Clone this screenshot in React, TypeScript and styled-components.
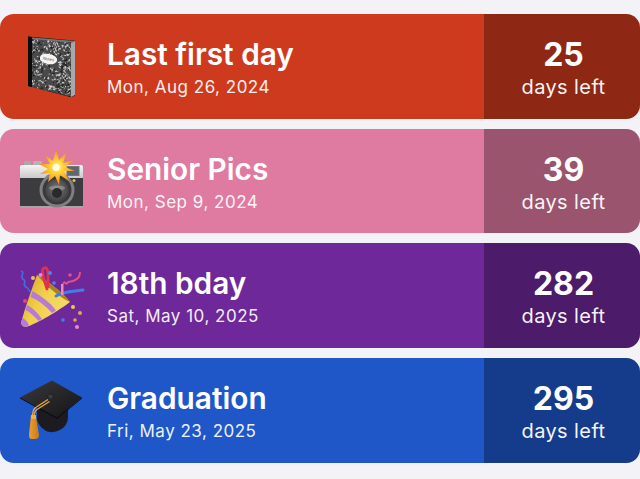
import React from "react";
import styled, { createGlobalStyle } from "styled-components";

const GlobalStyle = createGlobalStyle`
  html, body {
    margin: 0;
    padding: 0;
    background: #f2f2f7;
    font-family: "Inter", "Liberation Sans", sans-serif;
  }
`;

const Page = styled.div`
  width: 640px;
  height: 479px;
  box-sizing: border-box;
  padding-top: 14px;
  display: flex;
  flex-direction: column;
  gap: 10px;
  overflow: hidden;
`;

const Card = styled.div<{ $bg: string }>`
  height: 104.7px;
  flex: none;
  display: flex;
  align-items: stretch;
  border-radius: 14px;
  overflow: hidden;
  background: ${(p) => p.$bg};
  color: #fff;
`;

const IconSlot = styled.div`
  width: 70px;
  margin-left: 18px;
  flex: none;
  display: flex;
  align-items: center;
`;

const Info = styled.div`
  flex: 1;
  margin-left: 20px;
  padding-top: 2px;
  display: flex;
  flex-direction: column;
  justify-content: center;
  gap: 6px;
`;

const Title = styled.div`
  font-size: 29.8px;
  line-height: 34px;
  font-weight: 600;
  margin-left: -1px;
`;

const DateText = styled.div`
  font-size: 17px;
  line-height: 21px;
  letter-spacing: 0.5px;
  opacity: 0.92;
  margin-left: -1px;
`;

const Countdown = styled.div`
  width: 156px;
  flex: none;
  box-sizing: border-box;
  padding: 2px 0 0 3px;
  background: rgba(0, 0, 0, 0.31);
  display: flex;
  flex-direction: column;
  align-items: center;
  justify-content: center;
  gap: 1px;
`;

const Count = styled.div`
  font-size: 32px;
  line-height: 39px;
  font-weight: 700;
`;

const Unit = styled.div`
  font-size: 20px;
  line-height: 25px;
  letter-spacing: 0.4px;
  opacity: 0.95;
`;

// small seeded random so the marble cover looks the same on every run
let seed = 7;
const rnd = () => {
  seed = (seed * 16807) % 2147483647;
  return seed / 2147483647;
};

const speckles = Array.from({ length: 520 }, () => ({
  x: 12 + rnd() * 44,
  y: 5 + rnd() * 62,
  w: 0.5 + rnd() * 1,
  h: 0.3 + rnd() * 0.5,
  r: rnd() * 180,
  light: rnd() > 0.35,
}));

const Notebook = () => (
  <svg width="70" height="70" viewBox="0 0 70 70">
    <defs>
      <clipPath id="cover">
        <polygon points="14,8 53,11.500 53,65.500 14,56" />
      </clipPath>
    </defs>
    <polygon points="10,5.500 56,9.500 57,10 57,65 52,66 10,55" fill="#1b1b1b" />
    <polygon points="14,6.500 57,10 53,12 14,9" fill="#77777a" />
    <polygon points="10,5.500 14,6 14,56 10,55" fill="#0c0c0c" />
    <polygon points="14,8 53,11.500 53,65.500 14,56" fill="#4a4a4a" />
    <g clipPath="url(#cover)">
      {speckles.map((s, i) => (
        <ellipse
          key={i}
          cx={s.x}
          cy={s.y}
          rx={s.w}
          ry={s.h}
          transform={`rotate(${s.r} ${s.x} ${s.y})`}
          fill={s.light ? "#cfcfcf" : "#1c1c1c"}
        />
      ))}
    </g>
    <polygon points="53,12 57,10 57,64 53,66" fill="#a8a8a8" />
    <ellipse cx="30.500" cy="28" rx="8.800" ry="5.200" transform="rotate(10 30.500 28)" fill="#f4f4f4" />
    <text x="30.500" y="29.500" fontSize="4" fontFamily="Inter, sans-serif" textAnchor="middle" fill="#555" transform="rotate(10 30.500 28)">
      Notes
    </text>
  </svg>
);

const Camera = () => (
  <svg width="70" height="70" viewBox="0 0 70 70">
    <defs>
      <linearGradient id="silver" x1="0" y1="0" x2="0" y2="1">
        <stop offset="0" stopColor="#f4f4f4" />
        <stop offset="1" stopColor="#c6c6c6" />
      </linearGradient>
      <radialGradient id="glass" cx="0.5" cy="0.45" r="0.6">
        <stop offset="0" stopColor="#7a7a7c" />
        <stop offset="1" stopColor="#3a3a3c" />
      </radialGradient>
      <radialGradient id="flash" cx="0.5" cy="0.5" r="0.5">
        <stop offset="0" stopColor="#fffbe0" />
        <stop offset="0.3" stopColor="#ffd83a" />
        <stop offset="1" stopColor="#f58a12" />
      </radialGradient>
    </defs>
    <rect x="6" y="15" width="7" height="5" rx="1" fill="#a9a9a9" />
    <rect x="15" y="15" width="9" height="5" rx="1" fill="#b4b4b4" />
    <rect x="2" y="19" width="63" height="14" rx="2" fill="url(#silver)" />
    <path d="M2 32h63v27q0 2.500-2.500 2.500h-58Q2 61.500 2 59z" fill="#3c3c3e" />
    <rect x="2" y="60" width="63" height="2" fill="#a6a6a6" />
    <circle cx="39" cy="44" r="17.500" fill="#808083" />
    <circle cx="39" cy="44" r="14.500" fill="#3a3a3c" />
    <circle cx="39" cy="44.500" r="11.500" fill="url(#glass)" />
    <ellipse cx="39" cy="42" rx="8" ry="2.500" fill="#a2a2a2" opacity="0.6" />
    <circle cx="39" cy="47" r="5" fill="#2a2a2c" />
    <rect x="49" y="20.500" width="12" height="9" fill="#5a6872" stroke="#77777a" />
    <circle cx="56" cy="34.500" r="1.500" fill="#e3c14b" />
    <polygon
      points="38,3 41,14 49,6 45,17 56,14 47,21 57,25 46,25 51,35 42,29 41,39 37,30 30,36 32,27 22,28 30,23 21,18 32,18 27,9 35,15"
      fill="url(#flash)"
    />
    <circle cx="38" cy="21.500" r="3.500" fill="#fffdf0" />
  </svg>
);

const Popper = () => (
  <svg width="70" height="70" viewBox="0 0 70 70" fill="none">
    <defs>
      <linearGradient id="cone" x1="0" y1="0" x2="1" y2="0.6">
        <stop offset="0" stopColor="#c9a21f" />
        <stop offset="0.5" stopColor="#f2cf4a" />
        <stop offset="1" stopColor="#f7dc6a" />
      </linearGradient>
    </defs>
    <path d="M3 62C6 50 13 30 19 14C30 20 45 32 52 41C42 49 18 63 8 66Q4 66 3 62z" fill="url(#cone)" />
    <path d="M14.500 30C23 35 32 41 38 49.500L34 52C28 45 20 39 12.500 36z" fill="#b77ad6" />
    <path d="M9 44C15 47 20 52 24 58L20.500 60C16 55 12 51 7.500 49z" fill="#b77ad6" />
    <path d="M4.500 57C7 58 9 60 11 64L8 66Q4 66 3 62z" fill="#b77ad6" />
    <path d="M19 14C30 20 45 32 52 41C44 38 30 27 19 14z" fill="#a8851a" />
    <path d="M29 28C26 18 22 9 26 7C31 5 30 15 30 26" stroke="#e5304c" strokeWidth="2.800" strokeLinecap="round" />
    <path d="M38 35C46 30 53 31 65 29" stroke="#3f7fe8" strokeWidth="3" strokeLinecap="round" />
    <path d="M3 10C8 12 1 15 5 18C10 21 3 23 8 26C12 28 10 30 13 31" stroke="#3c6fe0" strokeWidth="1.600" />
    <path d="M45 23C47 18 48 26 50 21L55 20C59 18 62 17 62 11" stroke="#e84d86" strokeWidth="2" />
    <rect x="43" y="23" width="2.500" height="11" fill="#f08ab0" />
    <circle cx="15" cy="17" r="2" fill="#eec14a" />
    <circle cx="22.500" cy="14" r="2" fill="#e58ad0" />
    <circle cx="32" cy="12" r="2" fill="#4b87e8" />
    <circle cx="36" cy="22" r="1.800" fill="#4b87e8" />
    <circle cx="52" cy="14" r="1.800" fill="#e84d86" />
    <circle cx="7" cy="40" r="2" fill="#e0476b" />
    <circle cx="55" cy="46" r="2" fill="#f2c84a" />
    <circle cx="62" cy="52" r="2" fill="#e2a25a" />
    <circle cx="57" cy="59" r="1.800" fill="#e2a25a" />
    <circle cx="59" cy="66" r="2" fill="#e58ad0" />
    <circle cx="45" cy="59" r="1.800" fill="#3f7fe8" />
  </svg>
);

const GradCap = () => (
  <svg width="70" height="70" viewBox="0 0 70 70">
    <defs>
      <linearGradient id="board" x1="0" y1="0" x2="1" y2="1">
        <stop offset="0" stopColor="#3a3a3e" />
        <stop offset="1" stopColor="#141416" />
      </linearGradient>
      <linearGradient id="tassel" x1="0" y1="0" x2="1" y2="0">
        <stop offset="0" stopColor="#e8a030" />
        <stop offset="1" stopColor="#c97a18" />
      </linearGradient>
    </defs>
    <path d="M19 33V45C22 54 30 58 35 57C44 56 50 50 50 42V30z" fill="#1c1c20" />
    <polygon points="2,22.500 34,5.500 64,22.500 39,42.500" fill="url(#board)" />
    <polygon points="2,22.500 39,42.500 39,44 2,23.500" fill="#0e0e10" />
    <polygon points="64,22.500 39,42.500 39,44 64,23.500" fill="#0e0e10" />
    <circle cx="33" cy="22" r="4" fill="#26262a" />
    <circle cx="32.500" cy="21.500" r="2" fill="#3c3c42" />
    <path d="M30 24.500L17 33C15 35 14.500 37 14.500 42" stroke="#e9a63a" strokeWidth="1.300" fill="none" />
    <path d="M31.500 26.500L19 34.500C17 36 16 38 16 42" stroke="#e9a63a" strokeWidth="1.300" fill="none" />
    <path d="M13 40h4.500l1 5 2.500 15c0 3-2 4-4 4h-3c-2 0-3-1-3-4z" fill="url(#tassel)" />
    <rect x="13" y="40" width="5" height="4" rx="1" fill="#f0b040" />
  </svg>
);

const events = [
  { title: "Last first day", date: "Mon, Aug 26, 2024", days: 25, bg: "#ce3a1e", icon: <Notebook /> },
  { title: "Senior Pics", date: "Mon, Sep 9, 2024", days: 39, bg: "#df7aa0", icon: <Camera /> },
  { title: "18th bday", date: "Sat, May 10, 2025", days: 282, bg: "#6e2899", icon: <Popper /> },
  { title: "Graduation", date: "Fri, May 23, 2025", days: 295, bg: "#1f57c9", icon: <GradCap /> },
];

const App = () => {
  return (
    <>
      <GlobalStyle />
      <Page>
        {events.map((e) => (
          <Card key={e.title} $bg={e.bg}>
            <IconSlot>{e.icon}</IconSlot>
            <Info>
              <Title>{e.title}</Title>
              <DateText>{e.date}</DateText>
            </Info>
            <Countdown>
              <Count>{e.days}</Count>
              <Unit>days left</Unit>
            </Countdown>
          </Card>
        ))}
      </Page>
    </>
  );
};

export default App;
